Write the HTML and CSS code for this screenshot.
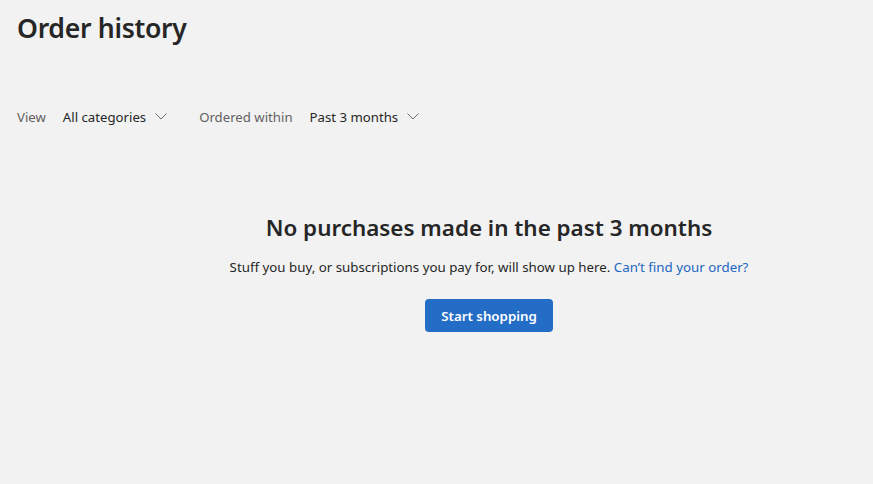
FILE: index.html
```html
<!DOCTYPE html>
<html lang="en">
<head>
<meta charset="utf-8">
<title>Order history</title>
<link rel="stylesheet" href="styles.css">
</head>
<body>
<main class="page">
  <h1 class="title">Order history</h1>
  <div class="filters">
    <span class="label">View</span>
    <button class="select">All categories
      <svg class="chev" width="12" height="7" viewBox="0 0 12 7"><path d="M0.5 0.5 L6 6 L11.5 0.5" fill="none" stroke="#6b6b6b" stroke-width="1"/></svg>
    </button>
    <span class="label label-gap">Ordered within</span>
    <button class="select">Past 3 months
      <svg class="chev" width="12" height="7" viewBox="0 0 12 7"><path d="M0.5 0.5 L6 6 L11.5 0.5" fill="none" stroke="#6b6b6b" stroke-width="1"/></svg>
    </button>
  </div>
  <section class="empty">
    <h2 class="empty-title">No purchases made in the past 3 months</h2>
    <p class="empty-text">Stuff you buy, or subscriptions you pay for, will show up here. <a class="link" href="#">Can’t find your order?</a></p>
    <button class="primary">Start shopping</button>
  </section>
</main>
</body>
</html>
```

FILE: styles.css
```css
html, body {
  margin: 0;
  padding: 0;
  background: #f2f2f2;
}
body {
  font-family: "Noto Sans", "Open Sans", sans-serif;
  color: #262626;
}
.page {
  padding: 0 0 0 17px;
}
.title {
  margin: 0;
  padding-top: 9px;
  font-size: 26.6px;
  line-height: 38px;
  font-weight: 600;
  color: #262626;
  letter-spacing: -0.3px;
}
.filters {
  display: flex;
  align-items: center;
  margin-top: 60px;
  height: 20px;
  font-size: 13.2px;
}
.label {
  color: #616161;
  margin-right: 17px;
}
.label-gap {
  margin-left: 32px;
}
.select {
  display: flex;
  align-items: center;
  gap: 9px;
  background: none;
  border: 0;
  padding: 0;
  font: inherit;
  color: #262626;
  cursor: pointer;
}
.chev {
  display: block;
  margin-top: -1px;
}
.empty {
  display: flex;
  flex-direction: column;
  align-items: center;
  margin-left: 88px;
  margin-top: 85px;
}
.empty-title {
  margin: 0;
  font-size: 22.4px;
  line-height: 32px;
  font-weight: 600;
  color: #262626;
}
.empty-text {
  margin: 14px 0 0;
  font-size: 13.3px;
  line-height: 18px;
  color: #262626;
}
.link {
  color: #2266c3;
  text-decoration: none;
}
.primary {
  margin-top: 23px;
  width: 128px;
  height: 33px;
  background: #246dc6;
  color: #fff;
  border: 0;
  border-radius: 4px;
  font: inherit;
  font-size: 13.3px;
  font-weight: 600;
  cursor: pointer;
}
```
